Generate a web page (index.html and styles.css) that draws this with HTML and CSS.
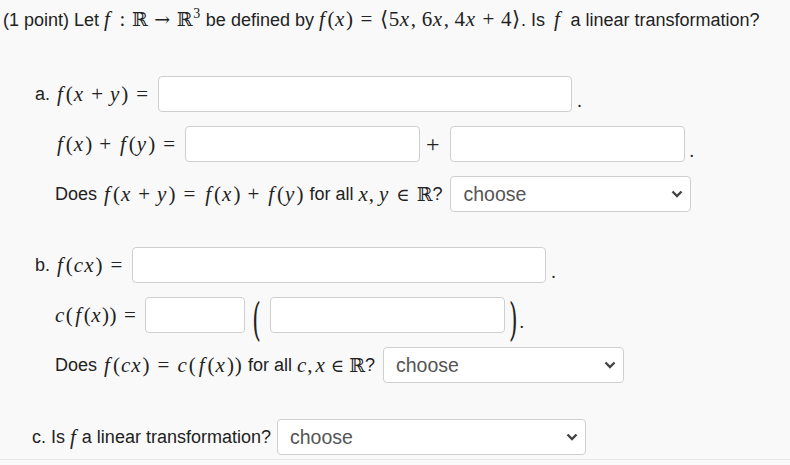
FILE: index.html
```html
<!DOCTYPE html>
<html lang="en">

<head>
    <meta charset="UTF-8">
    <title>Linear transformation</title>
    <link rel="stylesheet" href="styles.css">
</head>

<body>

<div class="problem">
    <p class="intro">
        (1 point) Let <span class="m"><i class="f">f</i><span class="colon">:</span><span class="bb">ℝ</span><span class="rel arrow">→</span><span class="bb">ℝ</span><sup>3</sup></span>
        be defined by
        <span class="m"><i class="f">f</i>(<i>x</i>)<span class="rel">=</span>⟨5<i>x</i>,<span class="sp"></span>6<i>x</i>,<span class="sp"></span>4<i>x</i><span class="op">+</span>4⟩</span>.
        Is <span class="m solo"><i>f</i></span> a linear transformation?
    </p>

    <div class="part part-a">
        <div class="row">
            <span class="label">a.</span>
            <span class="m"><i class="f">f</i>(<i>x</i><span class="op">+</span><i>y</i>)<span class="rel end">=</span></span>
            <input class="answer w-long" type="text">
            <span class="dot">.</span>
        </div>
        <div class="row indent">
            <span class="m"><i class="f">f</i>(<i>x</i>)<span class="op">+</span><i class="f">f</i>(<i>y</i>)<span class="rel end">=</span></span>
            <input class="answer w-mid" type="text">
            <span class="m plus">+</span>
            <input class="answer w-mid" type="text">
            <span class="dot">.</span>
        </div>
        <div class="row indent">
            <span class="txt">Does</span>
            <span class="m"><i class="f">f</i>(<i>x</i><span class="op">+</span><i>y</i>)<span class="rel">=</span><i class="f">f</i>(<i>x</i>)<span class="op">+</span><i class="f">f</i>(<i>y</i>)</span>
            <span class="txt">for all</span>
            <span class="m tight loose"><i>x</i>,<span class="sp"></span><i>y</i><span class="rel in">∈</span><span class="bb">ℝ</span></span><span class="txt q">?</span>
            <div class="pick w-sel">
                <select>
                    <option>choose</option>
                    <option>yes</option>
                    <option>no</option>
                </select>
                <svg class="chev" width="12" height="8" viewBox="0 0 12 8"><path d="M1.5 1.5 L6 6 L10.5 1.5" fill="none" stroke="#444" stroke-width="2.4"/></svg>
            </div>
        </div>
    </div>

    <div class="part part-b">
        <div class="row">
            <span class="label">b.</span>
            <span class="m"><i class="f">f</i>(<i>cx</i>)<span class="rel end">=</span></span>
            <input class="answer w-long" type="text">
            <span class="dot">.</span>
        </div>
        <div class="row indent">
            <span class="m snug"><i>c</i>(<i class="f">f</i>(<i>x</i>))<span class="rel end">=</span></span>
            <input class="answer w-short" type="text">
            <span class="big">(</span>
            <input class="answer w-mid" type="text">
            <span class="big close">)</span>
            <span class="dot">.</span>
        </div>
        <div class="row indent">
            <span class="txt">Does</span>
            <span class="m"><i class="f">f</i>(<i>cx</i>)<span class="rel">=</span><i>c</i>(<i class="f">f</i>(<i>x</i>))</span>
            <span class="txt">for all</span>
            <span class="m tight"><i>c</i>,<span class="sp"></span><i>x</i><span class="rel in">∈</span><span class="bb">ℝ</span></span><span class="txt q">?</span>
            <div class="pick w-sel">
                <select>
                    <option>choose</option>
                    <option>yes</option>
                    <option>no</option>
                </select>
                <svg class="chev" width="12" height="8" viewBox="0 0 12 8"><path d="M1.5 1.5 L6 6 L10.5 1.5" fill="none" stroke="#444" stroke-width="2.4"/></svg>
            </div>
        </div>
    </div>

    <div class="part part-c">
        <div class="row">
            <span class="txt">c. Is</span>
            <span class="m"><i>f</i></span>
            <span class="txt">a linear transformation?</span>
            <div class="pick w-sel-wide">
                <select>
                    <option>choose</option>
                    <option>yes</option>
                    <option>no</option>
                </select>
                <svg class="chev" width="12" height="8" viewBox="0 0 12 8"><path d="M1.5 1.5 L6 6 L10.5 1.5" fill="none" stroke="#444" stroke-width="2.4"/></svg>
            </div>
        </div>
    </div>
</div>

</body>

</html>
```

FILE: styles.css
```css
body {
    font-family: "Liberation Sans", Arial, sans-serif;
    font-size: 18px;
    color: #222;
    background-color: #f9f9f9;
    margin: 0;
    padding: 0;
}

.problem {
    height: 460px;
    padding: 0 3px;
    border-bottom: 1px solid #e6e6e6;
    box-sizing: border-box;
}

.intro {
    margin: 0;
    padding-top: 9px;
    line-height: 20px;
    white-space: nowrap;
}

/* math text */
.m {
    font-family: "Liberation Serif", "DejaVu Serif", serif;
    font-size: 21px;
    white-space: nowrap;
}

.m i {
    font-style: italic;
    padding-right: 1px;
}

.m i.f {
    padding-right: 2px;
}

.intro .m {
    letter-spacing: 0.6px;
}

.m sup {
    font-size: 14px;
    line-height: 0;
}

.solo {
    margin: 0 4px;
}

.row .m {
    letter-spacing: 1px;
}

.row .m.snug {
    letter-spacing: 0.5px;
}

.row .m.tight {
    letter-spacing: 0;
}

.row .m i.f {
    margin-left: 2px;
    padding-right: 2px;
}

.bb {
    font-family: "DejaVu Serif", serif;
    font-size: 19px;
}

.sp {
    display: inline-block;
    width: 5px;
}

.tight .sp {
    width: 3px;
}

.loose .sp {
    width: 5px;
}

.rel {
    padding: 0 7px;
}

.rel.end {
    padding-right: 6px;
}

.rel.arrow {
    font-family: "DejaVu Serif", serif;
    font-size: 19px;
    padding: 0 6px;
}

.rel.in {
    font-size: 18px;
    padding: 0 5px;
}

.loose .rel.in {
    padding: 0 7px;
}

.op {
    padding: 0 6px;
}

.colon {
    padding: 0 6px 0 7px;
}

.part {
    padding-left: 32px;
}

.part-a {
    margin-top: 46px;
}

.part-b {
    margin-top: 35px;
}

.part-c {
    margin-top: 36px;
    padding-left: 29px;
}

.row {
    display: flex;
    align-items: center;
    height: 36px;
    margin-bottom: 14px;
    white-space: nowrap;
}

.indent {
    padding-left: 20px;
}

.label {
    width: 20px;
}

.txt {
    margin-right: 5px;
}

.m + .txt {
    margin-left: 5px;
}

.m + .txt.q {
    margin-left: 0;
}

.part-c .txt {
    margin-right: 5px;
}

.part-c .m + .txt {
    margin-left: 4px;
}

.answer {
    height: 36px;
    box-sizing: border-box;
    border: 1px solid #cfcfcf;
    border-radius: 4px;
    background: #fff;
    margin: 0 0 0 3px;
    padding: 0 8px;
    font-size: 16px;
}

.w-long {
    width: 414px;
}

.w-mid {
    width: 235px;
}

.w-short {
    width: 100px;
}

.plus {
    margin: 0 6px 0 6px;
    font-size: 24px;
    font-weight: 300;
}

.dot {
    align-self: flex-end;
    margin-left: 5px;
    line-height: 22px;
    font-family: "Liberation Serif", serif;
}

.big {
    font-family: "DejaVu Serif", serif;
    font-size: 22px;
    font-weight: 300;
    transform: scaleY(2);
    margin: 8px 6px 0 7px;
}

.big.close {
    margin: 8px 0 0 4px;
}

.big.close + .dot {
    margin-left: 2px;
}

.pick {
    position: relative;
    margin-left: 3px;
}

.part-c .pick {
    margin-left: 1px;
}

.pick select {
    appearance: none;
    -webkit-appearance: none;
    width: 100%;
    height: 36px;
    border: 1px solid #cfcfcf;
    border-radius: 4px;
    background: #fff;
    color: #555;
    font-family: "Liberation Sans", Arial, sans-serif;
    font-size: 19.5px;
    padding: 0 12px;
}

.w-sel {
    width: 241px;
}

.w-sel-wide {
    width: 309px;
}

.chev {
    position: absolute;
    right: 8px;
    top: 14px;
    pointer-events: none;
}
```
